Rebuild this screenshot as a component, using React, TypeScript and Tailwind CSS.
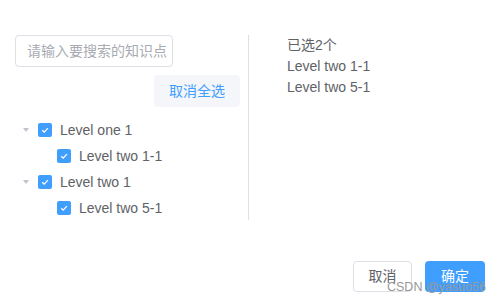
import React from 'react';

const font = { fontFamily: '"Liberation Sans", "Noto Sans CJK SC", sans-serif' };

type Node = { label: string; level: number; caret: boolean };

const nodes: Node[] = [
  { label: 'Level one 1', level: 0, caret: true },
  { label: 'Level two 1-1', level: 1, caret: false },
  { label: 'Level two 1', level: 0, caret: true },
  { label: 'Level two 5-1', level: 1, caret: false },
];

function Check() {
  return (
    <span className="w-[14px] h-[14px] rounded-[2px] bg-[#409eff] flex items-center justify-center shrink-0">
      <svg width="10" height="10" viewBox="0 0 10 10" fill="none">
        <path d="M2.2 5.2 L4.2 7.1 L7.9 3.1" stroke="white" strokeWidth="1.3" />
      </svg>
    </span>
  );
}

export default function App() {
  return (
    <div className="relative w-[499px] h-[304px] bg-white flex flex-col text-[14px] text-[#606266]" style={font}>
      <div className="flex pt-[35px]">
        <div className="w-[248px] pl-[15px]">
          <div className="w-[158px] h-[32px] border border-[#dcdfe6] rounded-[4px] flex items-center pl-[11px] overflow-hidden">
            <span className="text-[#a8abb2] whitespace-nowrap">请输入要搜索的知识点</span>
          </div>
          <div className="flex justify-end mt-[8px] pr-[8px]">
            <button className="w-[86px] h-[32px] rounded-[4px] bg-[#f4f6fa] text-[#409eff]">取消全选</button>
          </div>
          <div className="mt-[10px]">
            {nodes.map(n => (
              <div key={n.label} className={`h-[26px] flex items-center ${n.level === 0 ? 'pl-[8px]' : 'pl-[42px]'}`}>
                {n.caret && (
                  <span className="w-0 h-0 border-l-[3.5px] border-r-[3.5px] border-t-[4px] border-l-transparent border-r-transparent border-t-[#c0c4cc] mr-[9px]" />
                )}
                <Check />
                <span className="ml-[8px] whitespace-nowrap">{n.label}</span>
              </div>
            ))}
          </div>
        </div>
        <div className="w-px h-[185px] bg-[#dcdfe6]" />
        <div className="pl-[38px] leading-[21px]">
          <div>已选2个</div>
          <div>Level two 1-1</div>
          <div>Level two 5-1</div>
        </div>
      </div>
      <div className="mt-auto flex justify-end gap-[13px] pr-[14px] pb-[12px]">
        <button className="w-[59px] h-[31px] border border-[#dcdfe6] rounded-[4px] text-[#606266]">取消</button>
        <button className="w-[60px] h-[31px] rounded-[4px] bg-[#409eff] text-white">确定</button>
      </div>
      <span className="absolute left-[387px] top-[279px] text-[12.5px] leading-[16px] text-[#999999] whitespace-nowrap">CSDN @yasuo56</span>
    </div>
  );
}
